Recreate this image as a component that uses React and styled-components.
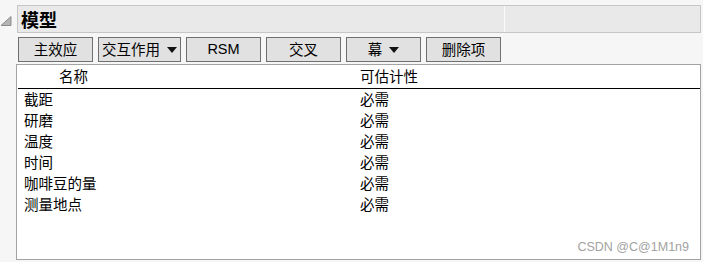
import React from 'react';
import styled, { createGlobalStyle } from 'styled-components';

const Global = createGlobalStyle`
body {
  margin: 0;
  background: #f6f6f6;
  font-family: "Noto Sans CJK SC", "Noto Sans", sans-serif;
  color: #000;
}`

const Page = styled.div`
width: 703px;
height: 262px;
padding-top: 5px;
box-sizing: border-box;`

const OutlineRow = styled.div`
display: flex;
align-items: flex-start;`

const Toggle = styled.div`
width: 17px;
height: 27px;
display: flex;
align-items: flex-end;
padding-bottom: 6px;
box-sizing: border-box;`

const HeaderBar = styled.div`
width: 684px;
height: 28px;
display: flex;
background: #e9e9e9;
border: 1px solid #c6c6c6;
box-sizing: border-box;`

const HeaderCell = styled.div`
width: ${p => p.w}px;
border-left: ${p => p.divider ? '1px solid #fafafa' : 'none'};
display: flex;
align-items: center;
padding-left: ${p => p.pad || 0}px;
box-sizing: border-box;`

const Title = styled.span`
font-size: 18px;
font-weight: bold;
line-height: 1;`

const Toolbar = styled.div`
display: flex;
gap: 5px;
margin: 4px 0 0 18px;`

const Button = styled.div`
width: ${p => p.w || 75}px;
height: 25px;
box-sizing: border-box;
border: 1px solid #6f6f6f;
background: #e1e1e1;
display: flex;
align-items: center;
justify-content: center;
gap: 7px;
font-size: 14.5px;
font-family: ${p => p.latin ? '"Liberation Sans", sans-serif' : 'inherit'};
line-height: 1;`

const Caret = styled.span`
width: 0;
height: 0;
border-left: 5px solid transparent;
border-right: 5px solid transparent;
border-top: 6px solid #111;
margin-top: 1px;`

const Table = styled.div`
position: relative;
margin: 2px 0 0 16px;
width: 685px;
height: 196px;
box-sizing: border-box;
background: #fff;
border: 1px solid #a3a3a3;
padding: 0 0 0 1px;`

const Row = styled.div`
display: grid;
grid-template-columns: 342px 1fr;
height: ${p => p.head ? 23 : 21}px;
align-items: center;
font-size: 14.5px;
line-height: 1;
border-bottom: ${p => p.head ? '1.5px solid #000' : 'none'};`

const Cell = styled.div`
padding-left: ${p => p.pad || 0}px;
white-space: nowrap;`

const Mark = styled.div`
position: absolute;
right: 11px;
bottom: 5px;
font-family: "Liberation Sans", sans-serif;
font-size: 12.5px;
color: #a2a2a2;`

const rows = ['截距', '研磨', '温度', '时间', '咖啡豆的量', '测量地点'];

export default function App() {
  return (
    <Page>
      <Global />
      <OutlineRow>
        <Toggle>
          <svg width="12" height="10" viewBox="0 0 12 10">
            <polygon points="11,0.5 11,9.5 1,9.5" fill="#b4b4b4" stroke="#8c8c8c" strokeWidth="1" />
          </svg>
        </Toggle>
        <HeaderBar>
          <HeaderCell w={486} pad={3}><Title>模型</Title></HeaderCell>
          <HeaderCell w={196} divider />
        </HeaderBar>
      </OutlineRow>
      <Toolbar>
        <Button>主效应</Button>
        <Button w={83}>交互作用<Caret /></Button>
        <Button latin>RSM</Button>
        <Button>交叉</Button>
        <Button>幕<Caret /></Button>
        <Button>删除项</Button>
      </Toolbar>
      <Table>
        <Row head>
          <Cell pad={41}>名称</Cell>
          <Cell>可估计性</Cell>
        </Row>
        {rows.map((name, i) => (
          <Row key={i}>
            <Cell pad={6}>{name}</Cell>
            <Cell>必需</Cell>
          </Row>
        ))}
        <Mark>CSDN @C@1M1n9</Mark>
      </Table>
    </Page>
  );
}
